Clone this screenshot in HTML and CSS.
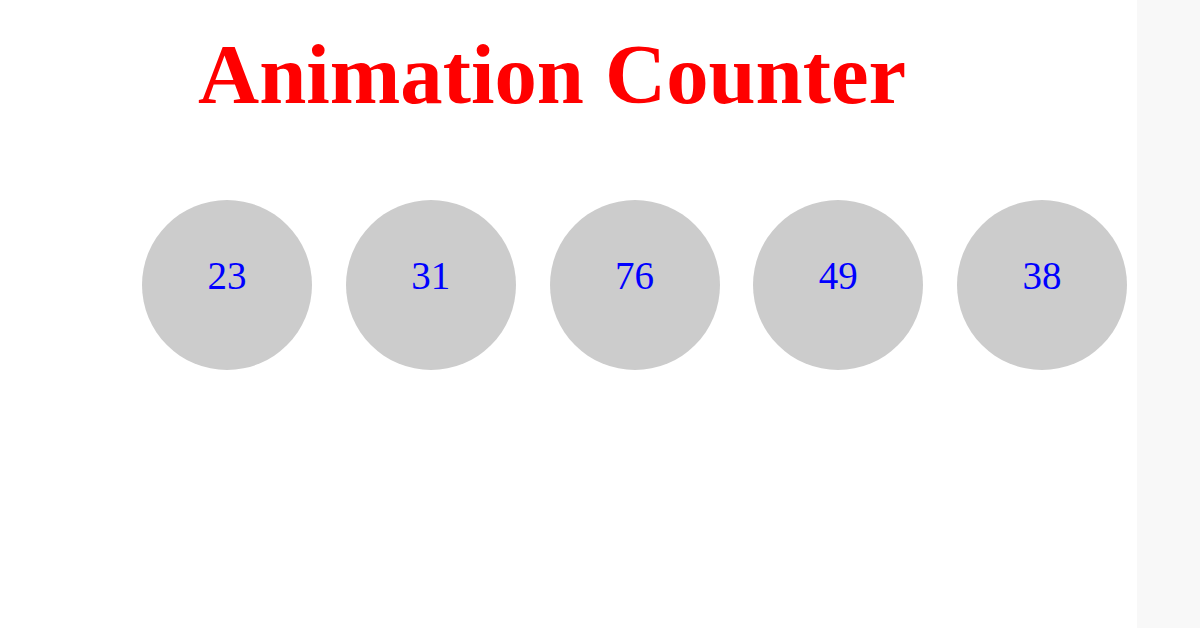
FILE: index.html
```html
<!DOCTYPE html>
<html lang="en">
<head>
<meta charset="utf-8">
<title>Animation Counter</title>
<link rel="stylesheet" href="styles.css">
</head>
<body>
<div class="page">
  <main class="main">
    <h1 class="title">Animation Counter</h1>
    <div class="counters">
      <div class="circle">23</div>
      <div class="circle">31</div>
      <div class="circle">76</div>
      <div class="circle">49</div>
      <div class="circle">38</div>
    </div>
  </main>
  <aside class="side"></aside>
</div>
</body>
</html>
```
FILE: styles.css
```css
html, body {
  margin: 0;
  padding: 0;
  background: #ffffff;
}
.page {
  display: flex;
  width: 1200px;
  height: 628px;
  overflow: hidden;
}
.main {
  flex: 0 0 1137px;
  background: #ffffff;
}
.side {
  flex: 1 1 auto;
  background: #f8f8f8;
}
.title {
  margin: 0;
  padding: 25px 0 0 198px;
  font-family: "Liberation Serif", "Times New Roman", serif;
  font-weight: 700;
  font-size: 84.7px;
  line-height: 100px;
  color: #ff0000;
  white-space: nowrap;
}
.counters {
  display: flex;
  gap: 33.75px;
  padding-left: 142px;
  margin-top: 75px;
}
.circle {
  flex: 0 0 170px;
  width: 170px;
  height: 170px;
  box-sizing: border-box;
  border-radius: 50%;
  background: #cccccc;
  color: #0000ff;
  font-family: "Liberation Serif", "Times New Roman", serif;
  font-size: 39px;
  line-height: 46px;
  padding-top: 53px;
  text-align: center;
}
```
